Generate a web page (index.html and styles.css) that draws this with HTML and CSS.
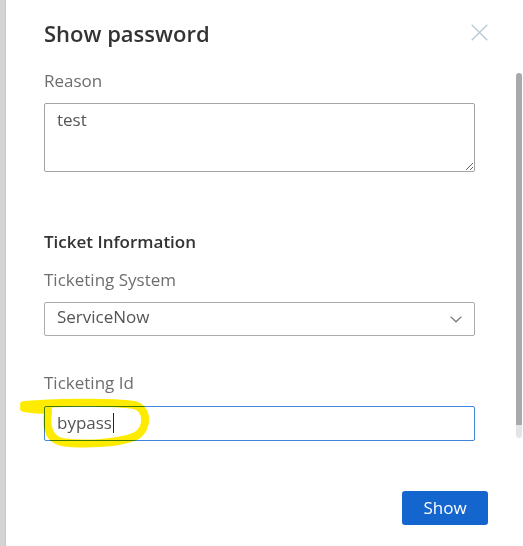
FILE: index.html
```html
<!DOCTYPE html>
<html lang="en">
<head>
<meta charset="utf-8">
<title>Show password</title>
<link rel="stylesheet" href="styles.css">
</head>
<body>
<div class="screen">
  <div class="edge"></div>
  <div class="dialog">
    <div class="header">
      <h1 class="title">Show password</h1>
      <button class="close" aria-label="Close">
        <svg width="17" height="17" viewBox="0 0 17 17"><path d="M0.7 0.7 L16.3 16.3 M16.3 0.7 L0.7 16.3" stroke="#b9cbd3" stroke-width="1.4" fill="none"/></svg>
      </button>
    </div>
    <div class="form">
      <div class="label label-reason">Reason</div>
      <textarea class="textarea">test</textarea>
      <div class="section">Ticket Information</div>
      <div class="label label-system">Ticketing System</div>
      <div class="select">
        <span>ServiceNow</span>
        <svg class="chev" width="12" height="7" viewBox="0 0 12 7"><polyline points="0.6,0.6 6,5.8 11.4,0.6" stroke="#7a7a7a" stroke-width="1.3" fill="none"/></svg>
      </div>
      <div class="label label-id">Ticketing Id</div>
      <div class="id-field">
        <div class="input"><span class="value">bypass</span><span class="caret"></span></div>
        <svg class="mark" width="136" height="56" viewBox="0 0 136 56"><path d="M6,9 C30,7 90,5 116,9 C130,12 131,32 118,40 C100,48 62,49 44,46 C30,43 28,30 30,16 M6,12 C12,13 20,14 30,14" stroke="#ffeb00" stroke-width="8" stroke-linecap="round" fill="none"/></svg>
      </div>
    </div>
    <div class="footer">
      <button class="show">Show</button>
    </div>
  </div>
  <div class="scroll-col">
    <div class="thumb"></div>
    <div class="track"></div>
  </div>
</div>
</body>
</html>
```
FILE: styles.css
```css
html, body {
  margin: 0;
  padding: 0;
  background: #ffffff;
}
body {
  font-family: "Open Sans", "Noto Sans", sans-serif;
  font-size: 17px;
  line-height: 24px;
  color: #333333;
}
.screen {
  display: flex;
  height: 546px;
  width: 523px;
  overflow: hidden;
}
.edge {
  width: 5px;
  background: #d4d4d4;
  border-right: 1px solid #c9c9c9;
  flex: none;
}
.dialog {
  flex: 1;
  display: flex;
  flex-direction: column;
  padding: 18px 28px 0 38px;
}
.header {
  display: flex;
  justify-content: space-between;
  align-items: flex-start;
}
.title {
  margin: 0;
  font-size: 22px;
  line-height: 30px;
  font-weight: 600;
  color: #333333;
}
.close {
  margin-top: 6px;
  padding: 0;
  border: 0;
  background: none;
  width: 17px;
  height: 17px;
  display: block;
}
.close svg { display: block; }
.form {
  width: 431px;
  display: flex;
  flex-direction: column;
}
.label {
  color: #6e6e6e;
}
.label-reason { margin-top: 21px; }
.textarea {
  margin-top: 10px;
  box-sizing: border-box;
  height: 69px;
  width: 431px;
  border: 1px solid #a3a3a3;
  border-radius: 2px;
  padding: 4px 12px;
  font: inherit;
  color: #555555;
  resize: vertical;
  outline: none;
  display: block;
}
.section {
  margin-top: 58px;
  font-weight: 600;
  color: #333333;
}
.label-system { margin-top: 14px; }
.select {
  margin-top: 10px;
  box-sizing: border-box;
  height: 34px;
  border: 1px solid #ababab;
  border-radius: 2px;
  padding: 2px 12px 6px;
  color: #555555;
  display: flex;
  justify-content: space-between;
  align-items: flex-start;
}
.chev {
  margin-top: 11px;
  display: block;
}
.label-id { margin-top: 35px; }
.id-field {
  margin-top: 11px;
  position: relative;
}
.input {
  box-sizing: border-box;
  height: 35px;
  border: 1px solid #3f86dc;
  border-radius: 2px;
  padding: 4px 12px 5px;
  color: #555555;
  display: flex;
  align-items: flex-start;
}
.caret {
  width: 1px;
  height: 20px;
  margin-top: 2px;
  margin-left: 1px;
  background: #222222;
}
.mark {
  position: absolute;
  left: -26px;
  top: -10px;
  mix-blend-mode: multiply;
  pointer-events: none;
}
.footer {
  display: flex;
  justify-content: flex-end;
  margin-top: 50px;
}
.show {
  width: 86px;
  height: 34px;
  border: 0;
  border-radius: 3px;
  background: #1565cf;
  color: #ffffff;
  font: inherit;
  padding: 0;
}
.scroll-col {
  width: 7px;
  flex: none;
  display: flex;
  flex-direction: column;
  padding-top: 73px;
}
.thumb {
  width: 6px;
  height: 352px;
  background: #a9a9a9;
  border-radius: 3px 3px 0 0;
}
.track {
  width: 6px;
  height: 13px;
  background: #e4e4e4;
  border-radius: 0 0 3px 3px;
}
```
